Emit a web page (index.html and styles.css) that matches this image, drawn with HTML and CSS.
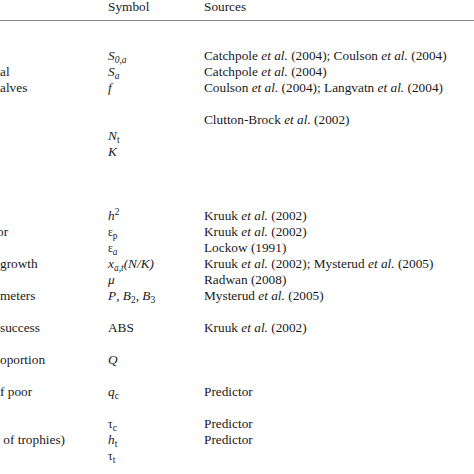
FILE: index.html
```html
<!DOCTYPE html>
<html>
<head>
<meta charset="utf-8">
<link rel="stylesheet" href="styles.css">
</head>
<body>
<div class="table">
  <div class="row head">
    <div class="c1"></div>
    <div class="c2">Symbol</div>
    <div class="c3">Sources</div>
  </div>
  <div class="body">
    <div class="row"><div class="c1"></div><div class="c2"><i>S</i><sub><i>0,a</i></sub></div><div class="c3">Catchpole <i>et al.</i> (2004); Coulson <i>et al.</i> (2004)</div></div>
    <div class="row"><div class="c1">al</div><div class="c2"><i>S</i><sub><i>a</i></sub></div><div class="c3">Catchpole <i>et al.</i> (2004)</div></div>
    <div class="row"><div class="c1">alves</div><div class="c2"><i>f</i></div><div class="c3">Coulson <i>et al.</i> (2004); Langvatn <i>et al.</i> (2004)</div></div>
    <div class="row"></div>
    <div class="row"><div class="c1"></div><div class="c2"></div><div class="c3">Clutton-Brock <i>et al.</i> (2002)</div></div>
    <div class="row"><div class="c1"></div><div class="c2"><i>N</i><sub>t</sub></div><div class="c3"></div></div>
    <div class="row"><div class="c1"></div><div class="c2"><i>K</i></div><div class="c3"></div></div>
    <div class="row"></div>
    <div class="row"></div>
    <div class="row"></div>
    <div class="row"><div class="c1"></div><div class="c2"><i>h</i><sup>2</sup></div><div class="c3">Kruuk <i>et al.</i> (2002)</div></div>
    <div class="row"><div class="c1"><span class="cut">or</span></div><div class="c2"><span class="small">ε</span><sub>p</sub></div><div class="c3">Kruuk <i>et al.</i> (2002)</div></div>
    <div class="row"><div class="c1"></div><div class="c2"><span class="small">ε</span><sub><i>a</i></sub></div><div class="c3">Lockow (1991)</div></div>
    <div class="row"><div class="c1">growth</div><div class="c2"><i>x</i><sub><i>a,t</i></sub><i>(N/K)</i></div><div class="c3">Kruuk <i>et al.</i> (2002); Mysterud <i>et al.</i> (2005)</div></div>
    <div class="row"><div class="c1"></div><div class="c2"><i>μ</i></div><div class="c3">Radwan (2008)</div></div>
    <div class="row"><div class="c1">meters</div><div class="c2"><i>P</i>, <i>B</i><sub>2</sub>, <i>B</i><sub>3</sub></div><div class="c3">Mysterud <i>et al.</i> (2005)</div></div>
    <div class="row"></div>
    <div class="row"><div class="c1">success</div><div class="c2">ABS</div><div class="c3">Kruuk <i>et al.</i> (2002)</div></div>
    <div class="row"></div>
    <div class="row"><div class="c1">oportion</div><div class="c2"><i>Q</i></div><div class="c3"></div></div>
    <div class="row"></div>
    <div class="row"><div class="c1">f poor</div><div class="c2"><i>q</i><sub>c</sub></div><div class="c3">Predictor</div></div>
    <div class="row"></div>
    <div class="row"><div class="c1"></div><div class="c2"><span class="small">τ</span><sub>c</sub></div><div class="c3">Predictor</div></div>
    <div class="row"><div class="c1">&nbsp;of trophies)</div><div class="c2"><i>h</i><sub>t</sub></div><div class="c3">Predictor</div></div>
    <div class="row"><div class="c1"></div><div class="c2"><span class="small">τ</span><sub>t</sub></div><div class="c3"></div></div>
  </div>
</div>
</body>
</html>
```
FILE: styles.css
```css
html, body {
  margin: 0;
  padding: 0;
  background: #ffffff;
}
body {
  font-family: "Liberation Serif", "Times New Roman", serif;
  font-size: 13.3px;
  color: #1a1a1a;
  overflow: hidden;
  width: 474px;
  height: 474px;
}
.row {
  display: grid;
  grid-template-columns: 108px 96px 1fr;
  height: 16px;
  line-height: 16px;
  white-space: nowrap;
}
.head {
  height: 20px;
  line-height: 13px;
  border-bottom: 1px solid #858585;
}
.body {
  padding-top: 27px;
}
.c1 {
  overflow: hidden;
}
.cut {
  display: inline-block;
  margin-left: -3px;
}
sub, sup {
  font-size: 9.5px;
  line-height: 0;
}
sub {
  vertical-align: -3px;
}
sup {
  vertical-align: 5px;
}
.small {
  font-size: 11.5px;
}
```
